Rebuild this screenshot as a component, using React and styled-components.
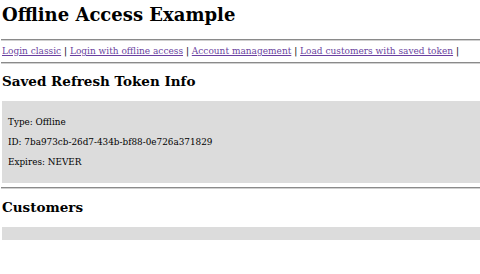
import React from "react";
import styled, { createGlobalStyle } from "styled-components";

const Global = createGlobalStyle`
  body {
    margin: 0;
    font-family: "DejaVu Serif", serif;
    font-size: 9px;
    color: #000;
    background: #fff;
  }
`;

const Page = styled.div`
  padding: 0 0 0 2px;
`;

const Title = styled.h1`
  font-size: 18px;
  margin: 4px 0 14px;
`;

const Rule = styled.hr`
  margin: ${(p) => p.$gap || "4px"} 0 4px -1px;
  border: 0;
  border-top: 1px solid #8a8a8a;
  border-bottom: 1px solid #d0d0d0;
`;

const Nav = styled.div`
  line-height: 13px;
  a {
    color: #6a3fa0;
  }
`;

const Heading = styled.h2`
  font-size: 13.5px;
  margin: ${(p) => p.$top || "9px"} 0 12px;
`;

const InfoBox = styled.div`
  background: #dcdcdc;
  padding: 7px 6px 6px;
  p {
    margin: 9px 0;
    line-height: 11px;
    font-size: 8.85px;
  }
`;

export default function App() {
  return (
    <Page>
      <Global />
      <Title>Offline Access Example</Title>
      <Rule />
      <Nav>
        <a href="#">Login classic</a> | <a href="#">Login with offline access</a> |{" "}
        <a href="#">Account management</a> | <a href="#">Load customers with saved token</a> |
      </Nav>
      <Rule />
      <Heading>Saved Refresh Token Info</Heading>
      <InfoBox>
        <p>Type: Offline</p>
        <p>ID: 7ba973cb-26d7-434b-bf88-0e726a371829</p>
        <p>Expires: NEVER</p>
      </InfoBox>
      <Rule $gap="4px" />
      <Heading $top="10px">Customers</Heading>
      <InfoBox />
    </Page>
  );
}
